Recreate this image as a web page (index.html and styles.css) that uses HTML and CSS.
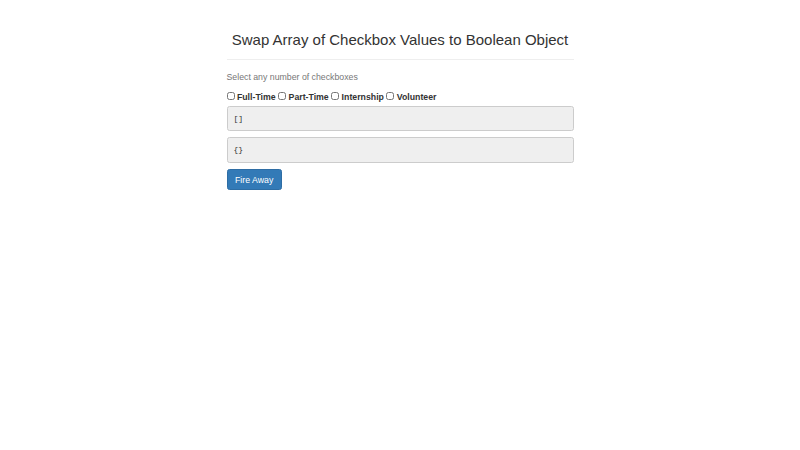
FILE: index.html
```html
<!DOCTYPE html>
<html lang="en">
<head>
    <meta charset="UTF-8">
    <title>Swap Array of Checkbox Values to Boolean Object</title>
    <link rel="stylesheet" href="styles.css">
</head>
<body>
    <div class="container">
        <h1 class="page-title">Swap Array of Checkbox Values to Boolean Object</h1>
        <hr>
        <p class="help">Select any number of checkboxes</p>
        <div class="options">
            <label><input type="checkbox" value="fullTime"> Full-Time</label>
            <label><input type="checkbox" value="partTime"> Part-Time</label>
            <label><input type="checkbox" value="internship"> Internship</label>
            <label><input type="checkbox" value="volunteer"> Volunteer</label>
        </div>
        <pre id="arrayOut">[]</pre>
        <pre id="objectOut">{}</pre>
        <button class="btn-primary" id="fire">Fire Away</button>
    </div>

    <script>
        const boxes = document.querySelectorAll('.options input');

        // массив отмеченных значений
        function checkedValues() {
            return Array.from(boxes).filter(b => b.checked).map(b => b.value);
        }

        boxes.forEach(b => b.addEventListener('change', () => {
            document.getElementById('arrayOut').textContent = JSON.stringify(checkedValues());
        }));

        document.getElementById('fire').addEventListener('click', () => {
            const result = {};
            checkedValues().forEach(v => result[v] = true);
            document.getElementById('objectOut').textContent = JSON.stringify(result);
        });
    </script>
</body>
</html>
```

FILE: styles.css
```css
body {
    margin: 0;
    font-family: "Liberation Sans", Arial, sans-serif;
    font-size: 8.75px;
    line-height: 12.5px;
    color: #333;
    background: #fff;
}
.container {
    width: 347px;
    margin: 0 auto;
    padding-top: 31.5px;
}
.page-title {
    margin: 0;
    font-size: 15px;
    font-weight: normal;
    line-height: 16.5px;
    text-align: center;
}
hr {
    margin: 11px 0 10.5px;
    border: 0;
    border-top: 1px solid #eee;
}
.help {
    margin: 0 0 7.8px;
    color: #777;
}
.options {
    height: 12.5px;
    margin-bottom: 2.5px;
    white-space: nowrap;
}
.options label {
    font-weight: bold;
}
.options input {
    width: 8px;
    height: 8px;
    margin: 0;
    vertical-align: -0.5px;
}
pre {
    margin: 0 0 6.25px;
    padding: 5.9px;
    font-family: "Liberation Mono", monospace;
    font-size: 8.1px;
    line-height: 11.6px;
    color: #333;
    background: #efefef;
    border: 1px solid #ccc;
    border-radius: 2.5px;
}
.btn-primary {
    height: 21.25px;
    padding: 0 7.5px;
    font-family: inherit;
    font-size: 8.75px;
    color: #fff;
    background: #337ab7;
    border: 1px solid #2e6da4;
    border-radius: 2.5px;
    cursor: pointer;
}
.btn-primary:hover {
    background: #286090;
}
```
